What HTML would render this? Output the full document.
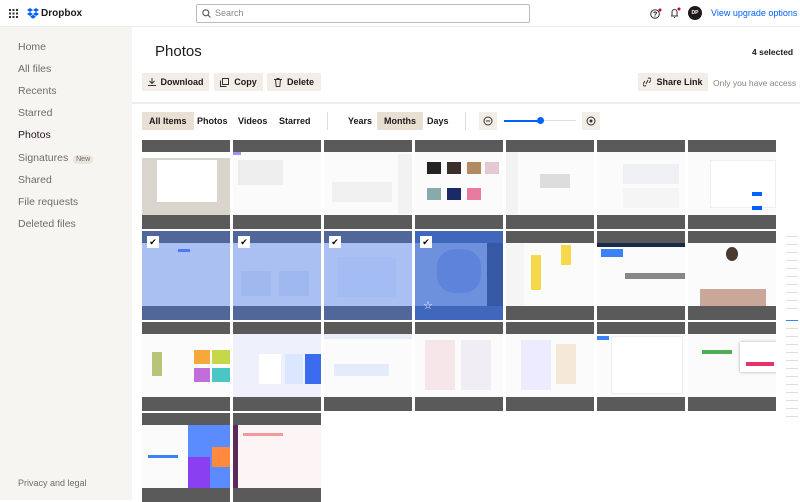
<!DOCTYPE html>
<html><head><meta charset="utf-8"><style>
*{box-sizing:border-box;margin:0;padding:0}
body{width:800px;height:500px;overflow:hidden;background:#fff;font-family:"Liberation Sans",sans-serif;position:relative;color:#1e1919}
.a{position:absolute}
.top{left:0;top:0;width:800px;height:27px;border-bottom:1px solid #eee;background:#fff}
.side{left:0;top:27px;width:132px;height:473px;background:#f7f5f2}
.nav{left:18px;font-size:10.5px;color:#736c64;white-space:nowrap}
.btn{background:#f2ede6;height:18px;font-size:9px;font-weight:bold;display:flex;align-items:center;justify-content:center;gap:5px;color:#1e1919;white-space:nowrap}
.tab{font-size:9px;font-weight:bold;height:18px;display:flex;align-items:center;padding:0 7px;white-space:nowrap}
.sel{background:#e9dfd2}
.t{width:88px;height:89px;background:#5a5a5a;overflow:hidden}
.t .c{position:absolute;left:0;top:12px;width:88px;height:63px;background:#fbfbfb}
.t .c i{position:absolute;display:block}
.t.s::after{content:"";position:absolute;inset:0;background:rgba(70,120,230,.45)}
.ck{left:5px;top:5px;width:12px;height:12px;background:#fff;z-index:2;font-size:9px;line-height:12px;text-align:center;color:#000}
.tick{left:786px;width:12px;height:1px;background:#ddd}
</style></head><body>
<div class="a top">
 <svg class="a" style="left:9px;top:9px" width="9" height="9"><g fill="#333"><rect x="0" y="0" width="2" height="2"/><rect x="3.5" y="0" width="2" height="2"/><rect x="7" y="0" width="2" height="2"/><rect x="0" y="3.5" width="2" height="2"/><rect x="3.5" y="3.5" width="2" height="2"/><rect x="7" y="3.5" width="2" height="2"/><rect x="0" y="7" width="2" height="2"/><rect x="3.5" y="7" width="2" height="2"/><rect x="7" y="7" width="2" height="2"/></g></svg>
 <svg class="a" style="left:27px;top:8px" width="12" height="11" viewBox="0 0 12 11"><path fill="#0061fe" d="M3 0L0 2l3 2 3-2zM9 0L6 2l3 2 3-2zM0 6l3 2 3-2-3-2zM9 4L6 6l3 2 3-2zM3 8.7L6 10.7 9 8.7 6 6.7z"/></svg>
 <div class="a" style="left:41px;top:8px;font-size:10px;font-weight:bold">Dropbox</div>
 <div class="a" style="left:196px;top:4px;width:334px;height:19px;border:1px solid #bbb;border-radius:2px"></div>
 <svg class="a" style="left:202px;top:9px" width="9" height="9"><circle cx="3.8" cy="3.8" r="3" stroke="#555" fill="none" stroke-width="1.1"/><path d="M6 6l2.5 2.5" stroke="#555" stroke-width="1.1"/></svg>
 <div class="a" style="left:215px;top:8px;font-size:9px;color:#888">Search</div>
 <svg class="a" style="left:650px;top:8px" width="12" height="12"><circle cx="5" cy="6" r="4.3" stroke="#333" fill="none"/><text x="3" y="8.5" font-size="7" font-family="Liberation Sans" font-weight="bold">?</text><circle cx="10" cy="2" r="1.5" fill="#c0003c"/></svg>
 <svg class="a" style="left:669px;top:7px" width="12" height="12"><path d="M2 9h7M3 9V5a2.5 2.5 0 015 0v4M5 10.5h1" stroke="#333" fill="none"/><circle cx="10" cy="2" r="1.5" fill="#c0003c"/></svg>
 <div class="a" style="left:688px;top:6px;width:14px;height:14px;border-radius:50%;background:#1e1919;color:#fff;font-size:5px;line-height:14px;text-align:center;font-weight:bold">DP</div>
 <div class="a" style="left:711px;top:8px;font-size:9px;color:#0061fe">View upgrade options</div>
</div>
<div class="a side">
 <div class="a nav" style="top:14px">Home</div>
 <div class="a nav" style="top:36px">All files</div>
 <div class="a nav" style="top:58px">Recents</div>
 <div class="a nav" style="top:80px">Starred</div>
 <div class="a nav" style="top:102px;color:#1e1919">Photos</div>
 <div class="a nav" style="top:125px">Signatures <span style="background:#ebe4da;font-size:7px;padding:1px 3px;border-radius:4px;margin-left:2px">New</span></div>
 <div class="a nav" style="top:147px">Shared</div>
 <div class="a nav" style="top:169px">File requests</div>
 <div class="a nav" style="top:191px">Deleted files</div>
 <div class="a nav" style="top:451px;font-size:9px">Privacy and legal</div>
</div>
<div class="a" style="left:155px;top:43px;font-size:15px">Photos</div>
<div class="a" style="left:752px;top:47px;font-size:8.5px;font-weight:bold">4 selected</div>
<div class="a btn" style="left:142px;top:73px;width:67px"><svg width="8" height="8"><path d="M4 0v5M1.5 3l2.5 2.5L6.5 3M0 7.5h8" stroke="#333" fill="none"/></svg>Download</div>
<div class="a btn" style="left:214px;top:73px;width:49px"><svg width="9" height="9"><rect x="2.5" y="0.5" width="6" height="6" stroke="#333" fill="none"/><path d="M0.5 2.5v6h6" stroke="#333" fill="none"/></svg>Copy</div>
<div class="a btn" style="left:267px;top:73px;width:54px"><svg width="8" height="9"><path d="M0 1.5h8M1.5 1.5l.7 7h3.6l.7-7M3 1.5V.5h2v1" stroke="#333" fill="none"/></svg>Delete</div>
<div class="a btn" style="left:638px;top:73px;width:70px"><svg width="8" height="10"><path d="M5 1.5a1.8 1.8 0 013 1.5L6 6M3 8.5A1.8 1.8 0 010 7l2-3M5 3L3 7" stroke="#333" fill="none"/></svg>Share Link</div>
<div class="a" style="left:713px;top:78px;font-size:8.5px;color:#8a837c">Only you have access</div>
<div class="a" style="left:132px;top:102px;width:668px;height:2px;background:#eee"></div>
<div class="a tab sel" style="left:142px;top:112px">All Items</div>
<div class="a tab" style="left:190px;top:112px">Photos</div>
<div class="a tab" style="left:231px;top:112px">Videos</div>
<div class="a tab" style="left:272px;top:112px">Starred</div>
<div class="a" style="left:327px;top:112px;width:1px;height:18px;background:#ddd"></div>
<div class="a tab" style="left:341px;top:112px">Years</div>
<div class="a tab sel" style="left:377px;top:112px">Months</div>
<div class="a tab" style="left:420px;top:112px">Days</div>
<div class="a" style="left:465px;top:112px;width:1px;height:18px;background:#ddd"></div>
<div class="a" style="left:479px;top:112px;width:18px;height:18px;background:#f2ede6"></div>
<svg class="a" style="left:483px;top:116px" width="10" height="10"><circle cx="5" cy="5" r="4" stroke="#333" fill="none"/><path d="M3 5h4" stroke="#333"/></svg>
<div class="a" style="left:504px;top:120px;width:72px;height:1px;background:#ddd"></div>
<div class="a" style="left:504px;top:120px;width:36px;height:1.5px;background:#0061fe"></div>
<div class="a" style="left:537px;top:117px;width:7px;height:7px;border-radius:50%;background:#0061fe"></div>
<div class="a" style="left:582px;top:112px;width:18px;height:18px;background:#f2ede6"></div>
<svg class="a" style="left:586px;top:116px" width="10" height="10"><circle cx="5" cy="5" r="4" stroke="#333" fill="none"/><circle cx="5" cy="5" r="1.5" fill="#333"/></svg>

<!-- row 1 -->
<div class="a t" style="left:142px;top:140px"><div class="c" style="background:#d9d4cc"><i style="left:15px;top:8px;width:60px;height:42px;background:#fff"></i><i style="left:0;top:0;width:89px;height:6px;background:#fff"></i></div></div>
<div class="a t" style="left:233px;top:140px"><div class="c"><i style="left:5px;top:8px;width:45px;height:25px;background:#eee"></i><i style="left:0;top:0;width:8px;height:3px;background:#a78bfa"></i></div></div>
<div class="a t" style="left:324px;top:140px"><div class="c"><i style="left:8px;top:30px;width:60px;height:20px;background:#f0f0f0"></i><i style="left:74px;top:2px;width:14px;height:60px;background:#f2f2f2"></i></div></div>
<div class="a t" style="left:415px;top:140px"><div class="c"><i style="left:12px;top:10px;width:14px;height:12px;background:#222"></i><i style="left:32px;top:10px;width:14px;height:12px;background:#3a2e28"></i><i style="left:52px;top:10px;width:14px;height:12px;background:#b08a60"></i><i style="left:70px;top:10px;width:14px;height:12px;background:#e6c8d2"></i><i style="left:32px;top:36px;width:14px;height:12px;background:#1a2a66"></i><i style="left:52px;top:36px;width:14px;height:12px;background:#e87aa0"></i><i style="left:12px;top:36px;width:14px;height:12px;background:#8aa"></i></div></div>
<div class="a t" style="left:506px;top:140px"><div class="c"><i style="left:34px;top:22px;width:30px;height:14px;background:#ddd"></i><i style="left:0;top:0;width:12px;height:63px;background:#f3f3f3"></i></div></div>
<div class="a t" style="left:597px;top:140px"><div class="c"><i style="left:26px;top:12px;width:56px;height:20px;background:#eef0f4"></i><i style="left:26px;top:36px;width:56px;height:20px;background:#f5f5f5"></i></div></div>
<div class="a t" style="left:688px;top:140px"><div class="c"><i style="left:22px;top:8px;width:66px;height:48px;background:#fff;border:1px solid #eee"></i><i style="left:64px;top:40px;width:10px;height:4px;background:#0061fe"></i><i style="left:64px;top:54px;width:10px;height:4px;background:#0061fe"></i></div></div>

<!-- row 2 -->
<div class="a t s" style="left:142px;top:231px"><div class="c"><i style="left:36px;top:6px;width:12px;height:3px;background:#4f7cff"></i></div><div class="a ck">✔</div></div>
<div class="a t s" style="left:233px;top:231px"><div class="c"><i style="left:8px;top:28px;width:30px;height:25px;background:#e8eef8"></i><i style="left:46px;top:28px;width:30px;height:25px;background:#e8eef8"></i></div><div class="a ck">✔</div></div>
<div class="a t s" style="left:324px;top:231px"><div class="c"><i style="left:14px;top:14px;width:58px;height:40px;background:#f0f4ff"></i></div><div class="a ck">✔</div></div>
<div class="a t s" style="left:415px;top:231px;background:#3a5a9a"><div class="c" style="background:#8ea6d8"><i style="left:22px;top:6px;width:44px;height:44px;border-radius:40%;background:#6f8fd0"></i><i style="left:72px;top:0;width:17px;height:63px;background:#2a3f70"></i></div><div class="a ck">✔</div><div class="a" style="left:8px;top:68px;color:#fff;font-size:11px;z-index:2">☆</div></div>
<div class="a t" style="left:506px;top:231px"><div class="c"><i style="left:25px;top:12px;width:10px;height:35px;background:#f6d94a"></i><i style="left:55px;top:2px;width:10px;height:20px;background:#f6d94a"></i><i style="left:0;top:0;width:18px;height:63px;background:#f5f5f5"></i></div></div>
<div class="a t" style="left:597px;top:231px"><div class="c"><i style="left:0;top:0;width:89px;height:4px;background:#1b2a4a"></i><i style="left:4px;top:6px;width:22px;height:8px;background:#3b82f6"></i><i style="left:28px;top:30px;width:60px;height:6px;background:#888"></i></div></div>
<div class="a t" style="left:688px;top:231px"><div class="c"><i style="left:38px;top:4px;width:12px;height:14px;border-radius:50%;background:#4a3a30"></i><i style="left:12px;top:46px;width:66px;height:17px;background:#c9a89a"></i></div></div>

<!-- row 3 -->
<div class="a t" style="left:142px;top:322px"><div class="c"><i style="left:52px;top:16px;width:16px;height:14px;background:#f6a93b"></i><i style="left:70px;top:16px;width:18px;height:14px;background:#c6d84a"></i><i style="left:52px;top:34px;width:16px;height:14px;background:#c06ed8"></i><i style="left:70px;top:34px;width:18px;height:14px;background:#4ac6c6"></i><i style="left:10px;top:18px;width:10px;height:24px;background:#b9c47a"></i></div></div>
<div class="a t" style="left:233px;top:322px"><div class="c" style="background:#eef1fb"><i style="left:52px;top:20px;width:18px;height:30px;background:#dbe6ff"></i><i style="left:72px;top:20px;width:17px;height:30px;background:#3b6cf0"></i><i style="left:26px;top:20px;width:22px;height:30px;background:#fff"></i></div></div>
<div class="a t" style="left:324px;top:322px"><div class="c"><i style="left:0;top:0;width:89px;height:5px;background:#e8edf7"></i><i style="left:10px;top:30px;width:55px;height:12px;background:#e4ecfb"></i></div></div>
<div class="a t" style="left:415px;top:322px"><div class="c"><i style="left:10px;top:6px;width:30px;height:50px;background:#f7e6e9"></i><i style="left:46px;top:6px;width:30px;height:50px;background:#f0eef4"></i></div></div>
<div class="a t" style="left:506px;top:322px"><div class="c"><i style="left:15px;top:6px;width:30px;height:50px;background:#ecebff"></i><i style="left:50px;top:10px;width:20px;height:40px;background:#f5e8d8"></i></div></div>
<div class="a t" style="left:597px;top:322px"><div class="c"><i style="left:0;top:2px;width:12px;height:4px;background:#3b82f6"></i><i style="left:14px;top:2px;width:72px;height:58px;background:#fff;border:1px solid #eee"></i></div></div>
<div class="a t" style="left:688px;top:322px"><div class="c"><i style="left:52px;top:8px;width:37px;height:30px;background:#fff;box-shadow:0 0 3px #aaa"></i><i style="left:58px;top:28px;width:28px;height:4px;background:#e8336a"></i><i style="left:14px;top:16px;width:30px;height:4px;background:#4caf50"></i></div></div>

<!-- row 4 -->
<div class="a t" style="left:142px;top:413px"><div class="c"><i style="left:46px;top:0;width:43px;height:63px;background:#5b8cff"></i><i style="left:46px;top:32px;width:22px;height:31px;background:#8a3ff0"></i><i style="left:70px;top:22px;width:19px;height:20px;background:#ff8a3d"></i><i style="left:6px;top:30px;width:30px;height:3px;background:#3b82f6"></i></div></div>
<div class="a t" style="left:233px;top:413px"><div class="c" style="background:#fdf5f5"><i style="left:0;top:0;width:5px;height:63px;background:#5a2a5a"></i><i style="left:10px;top:8px;width:40px;height:3px;background:#f19a9a"></i></div></div>

<!-- scrubber -->
<div class="a tick" style="top:236px"></div><div class="a tick" style="top:244px"></div><div class="a tick" style="top:252px"></div><div class="a tick" style="top:260px"></div><div class="a tick" style="top:268px"></div><div class="a tick" style="top:276px"></div><div class="a tick" style="top:284px"></div><div class="a tick" style="top:292px"></div><div class="a tick" style="top:300px"></div><div class="a tick" style="top:308px"></div><div class="a tick" style="top:320px;background:#3b82f6"></div><div class="a tick" style="top:328px"></div><div class="a tick" style="top:336px"></div><div class="a tick" style="top:344px"></div><div class="a tick" style="top:352px"></div><div class="a tick" style="top:360px"></div><div class="a tick" style="top:368px"></div><div class="a tick" style="top:376px"></div><div class="a tick" style="top:384px"></div><div class="a tick" style="top:392px"></div><div class="a tick" style="top:400px"></div><div class="a tick" style="top:408px"></div><div class="a tick" style="top:416px"></div>
</body></html>
